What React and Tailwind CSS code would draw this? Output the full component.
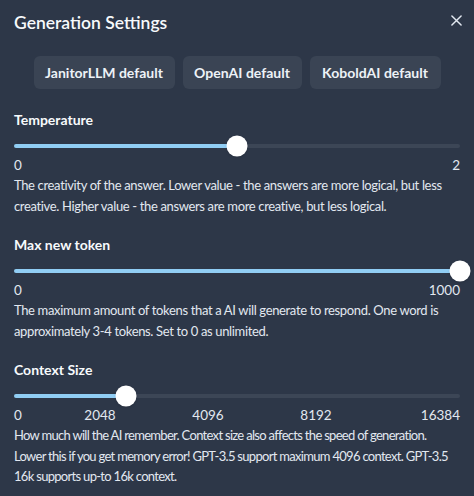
import React from 'react';

const font = { fontFamily: 'Lato, "Open Sans", Arial, sans-serif' };

function Slider({ value }) {
  return (
    <div className="relative h-[18px] flex items-center">
      <div className="w-full h-1 rounded-full bg-[#3c4656]">
        <div className="h-1 rounded-full bg-[#90cdf4]" style={{ width: `${value}%` }} />
      </div>
      <div
        className="absolute top-1/2 w-[21px] h-[21px] -translate-x-1/2 -translate-y-1/2 rounded-full bg-white shadow"
        style={{ left: `${value}%` }}
      />
    </div>
  );
}

function Section({ title, value, ticks, tight, children }) {
  return (
    <div className="flex flex-col">
      <div className="text-[14px] font-bold leading-5 text-[#f7fafc]">{title}</div>
      <div className="mt-[7px]">
        <Slider value={value} />
      </div>
      {ticks}
      <p className={tight ? 'text-[13px] leading-[20.5px] tracking-[-0.7px] text-[#e2e8f0]' : 'text-[13px] leading-[20.5px] tracking-[-0.35px] text-[#e2e8f0]'}>
        {children}
      </p>
    </div>
  );
}

export default function App() {
  return (
    <div className="w-[474px] h-[496px] bg-[#2d3748] overflow-hidden text-[#e2e8f0]" style={font}>
      <div className="flex items-start justify-between pl-[14px] pr-[10px] pt-[9px]">
        <h2 className="text-[17.5px] font-semibold leading-7 text-[#f7fafc]">Generation Settings</h2>
        <button className="mt-[3px] w-[16px] h-[16px] flex items-center justify-center text-[#e2e8f0]">
          <svg width="11" height="11" viewBox="0 0 12 12" fill="none" stroke="currentColor" strokeWidth="1.6" strokeLinecap="round">
            <path d="M1 1l10 10M11 1L1 11" />
          </svg>
        </button>
      </div>

      <div className="flex justify-center gap-2 mt-[19px]">
        <button className="w-[141px] h-[33px] rounded-md bg-[#3a4454] text-[14px] font-bold text-[#edf2f7]">JanitorLLM default</button>
        <button className="w-[119px] h-[33px] rounded-md bg-[#3a4454] text-[14px] font-bold text-[#edf2f7]">OpenAI default</button>
        <button className="w-[131px] h-[33px] rounded-md bg-[#3a4454] text-[14px] font-bold text-[#edf2f7]">KoboldAI default</button>
      </div>

      <div className="px-[14px] mt-[21px] flex flex-col gap-[19px]">
        <Section
          title="Temperature"
          value={50}
          ticks={
            <div className="flex justify-between text-[13.5px] leading-5">
              <span>0</span>
              <span>2</span>
            </div>
          }
        >
          The creativity of the answer. Lower value - the answers are more logical, but less creative. Higher value - the answers are more creative, but less logical.
        </Section>

        <Section
          title="Max new token"
          value={100}
          ticks={
            <div className="flex justify-between text-[13.5px] leading-5">
              <span>0</span>
              <span>1000</span>
            </div>
          }
        >
          The maximum amount of tokens that a AI will generate to respond. One word is approximately 3-4 tokens. Set to 0 as unlimited.
        </Section>

        <Section
          title="Context Size"
          value={25}
          tight
          ticks={
            <div className="grid grid-cols-[43px_86px_130px_86px_1fr] text-[13.5px] leading-5">
              <span>0</span>
              <span className="text-center">2048</span>
              <span className="text-center">4096</span>
              <span className="text-center">8192</span>
              <span className="text-right">16384</span>
            </div>
          }
        >
          How much will the AI remember. Context size also affects the speed of generation. Lower this if you get memory error! GPT-3.5 support maximum 4096 context. GPT-3.5 16k supports up-to 16k context.
        </Section>
      </div>
    </div>
  );
}
